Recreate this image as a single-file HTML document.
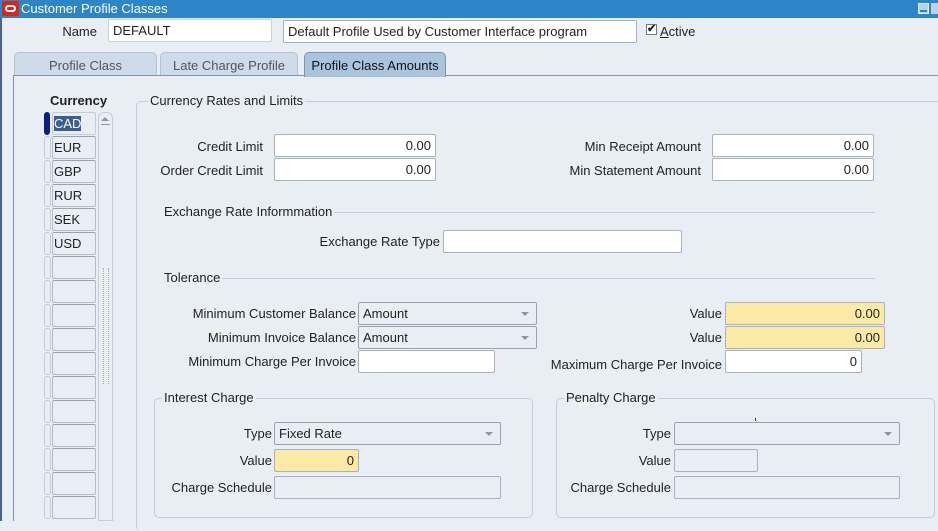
<!DOCTYPE html>
<html><head><style>
*{box-sizing:border-box;margin:0;padding:0}
body{width:938px;height:521px;overflow:hidden;background:#e9eef5;font-family:"Liberation Sans",sans-serif;font-size:13px;color:#222;position:relative}
.a{position:absolute}
.lbl{position:absolute;text-align:right;white-space:nowrap;font-size:13px}
.f{position:absolute;background:#fff;border:1px solid #a8b2bf;border-radius:2px;height:23px;line-height:21px;padding:0 4px;font-size:13px;white-space:nowrap}
.y{background:#fbeaa5}
.d{background:#e9eef5}
.r{text-align:right}
.dd::after{content:"";position:absolute;right:7px;top:9px;border-left:4px solid transparent;border-right:4px solid transparent;border-top:4px solid #8d96a2}
.dd{background:#e9eef5;border-color:#9aa3ae}
.box{position:absolute;border:1px solid #c3ccd8;border-radius:5px}
.leg{position:absolute;background:#e9eef5;padding:0 2px;font-size:13px}
.hl{position:absolute;height:1px;background:#c3ccd8}
.tab{position:absolute;top:52px;height:24px;border:1px solid #b4c3d4;border-bottom:none;border-radius:5px 5px 0 0;background:#cddbea;color:#555;text-align:center;line-height:25px;font-size:13px}
.cell{position:absolute;left:44px;width:52px;height:23px}
.cell .i{position:absolute;left:0;top:0;width:7px;height:23px;border:1px solid #c3ccd8;border-radius:3px}
.cell .v{position:absolute;left:8px;top:0;width:44px;height:23px;border:1px solid #b4bcc8;border-top-color:#9aa2ad;border-radius:2px;padding-left:1px;line-height:21px}
</style></head><body>
<div class="a" style="left:0;top:0;width:938px;height:18px;background:#2d84c6"></div>
<div class="a" style="left:2px;top:1px;width:17px;height:15px;background:#d9261c"></div>
<div class="a" style="left:5px;top:5px;width:11px;height:7px;border:2px solid #fff;border-radius:4px"></div>
<div class="a" style="left:21px;top:1px;color:#fff;font-size:13px;line-height:16px">Customer Profile Classes</div>
<div class="a" style="left:918px;top:3px;width:11px;height:11px;background:#b9d2ea;border:1px solid #e0ecf7"></div>
<div class="a" style="left:920px;top:10px;width:7px;height:2px;background:#2d84c6"></div>
<div class="a" style="left:931px;top:3px;width:7px;height:11px;background:#b9d2ea"></div>
<div class="a" style="left:0;top:18px;width:2px;height:503px;background:#4a6590"></div>

<div class="lbl" style="right:841px;top:24px">Name</div>
<div class="f" style="left:108px;top:19px;width:164px;border-color:#c9d0d9">DEFAULT</div>
<div class="f" style="left:283px;top:20px;width:354px">Default Profile Used by Customer Interface program</div>
<div class="a" style="left:646px;top:24px;width:11px;height:11px;border:1px solid #777;background:#fff;font-size:11px;line-height:9px;text-align:center;font-weight:bold">✔</div>
<div class="a" style="left:660px;top:24px"><u>A</u>ctive</div>

<div class="tab" style="left:14px;width:143px">Profile Class</div>
<div class="tab" style="left:160px;width:138px">Late Charge Profile</div>
<div class="a" style="left:13px;top:75px;width:925px;height:1px;background:#7f94ad"></div>
<div class="a" style="left:13px;top:75px;width:1px;height:446px;background:#7f94ad"></div>
<div class="tab" style="left:304px;width:142px;height:25px;background:#a9c5de;color:#111;border-color:#7f94ad">Profile Class Amounts</div>

<div class="a" style="left:50px;top:93px;font-weight:bold;font-size:13px">Currency</div>
<div class="cell" style="top:112px"><div class="i" style="background:#0a1f7f;border-color:#0a1f7f;width:6px"></div><div class="v" style="border-color:#c3ccd8"><span style="background:#3a5f8f;color:#fff">CAD</span></div></div>
<div class="cell" style="top:136px"><div class="i"></div><div class="v">EUR</div></div>
<div class="cell" style="top:160px"><div class="i"></div><div class="v">GBP</div></div>
<div class="cell" style="top:184px"><div class="i"></div><div class="v">RUR</div></div>
<div class="cell" style="top:208px"><div class="i"></div><div class="v">SEK</div></div>
<div class="cell" style="top:232px"><div class="i"></div><div class="v">USD</div></div>
<div class="cell" style="top:256px"><div class="i"></div><div class="v"></div></div>
<div class="cell" style="top:280px"><div class="i"></div><div class="v"></div></div>
<div class="cell" style="top:304px"><div class="i"></div><div class="v"></div></div>
<div class="cell" style="top:328px"><div class="i"></div><div class="v"></div></div>
<div class="cell" style="top:352px"><div class="i"></div><div class="v"></div></div>
<div class="cell" style="top:376px"><div class="i"></div><div class="v"></div></div>
<div class="cell" style="top:400px"><div class="i"></div><div class="v"></div></div>
<div class="cell" style="top:424px"><div class="i"></div><div class="v"></div></div>
<div class="cell" style="top:448px"><div class="i"></div><div class="v"></div></div>
<div class="cell" style="top:472px"><div class="i"></div><div class="v"></div></div>
<div class="cell" style="top:496px"><div class="i"></div><div class="v"></div></div>
<div class="a" style="left:98px;top:112px;width:15px;height:409px;border:1px solid #c3ccd8;border-radius:6px 6px 0 0"></div>
<div class="a" style="left:101px;top:117px;border-left:4px solid transparent;border-right:4px solid transparent;border-bottom:4px solid #8d96a2"></div>
<div class="a" style="left:101px;top:124px;width:9px;height:1px;background:#8d96a2"></div>
<div class="a" style="left:103px;top:268px;width:6px;height:116px;border-left:1px dotted #aaa;border-right:1px dotted #aaa"></div>

<div class="box" style="left:136px;top:101px;width:810px;height:430px;border-right:none;border-bottom:none"></div>
<div class="leg" style="left:148px;top:93px">Currency Rates and Limits</div>

<div class="lbl" style="right:675px;top:139px">Credit Limit</div>
<div class="f r" style="left:274px;top:134px;width:162px">0.00</div>
<div class="lbl" style="right:675px;top:163px">Order Credit Limit</div>
<div class="f r" style="left:274px;top:158px;width:162px">0.00</div>
<div class="lbl" style="right:237px;top:139px">Min Receipt Amount</div>
<div class="f r" style="left:712px;top:134px;width:162px">0.00</div>
<div class="lbl" style="right:237px;top:163px">Min Statement Amount</div>
<div class="f r" style="left:712px;top:158px;width:162px">0.00</div>

<div class="hl" style="left:162px;top:212px;width:713px"></div>
<div class="leg" style="left:162px;top:204px">Exchange Rate Informmation</div>
<div class="lbl" style="right:498px;top:234px">Exchange Rate Type</div>
<div class="f" style="left:443px;top:230px;width:239px"></div>

<div class="hl" style="left:162px;top:278px;width:713px"></div>
<div class="leg" style="left:162px;top:270px">Tolerance</div>
<div class="lbl" style="right:582px;top:306px">Minimum Customer Balance</div>
<div class="f dd" style="left:358px;top:302px;width:179px">Amount</div>
<div class="lbl" style="right:582px;top:330px">Minimum Invoice Balance</div>
<div class="f dd" style="left:358px;top:326px;width:179px">Amount</div>
<div class="lbl" style="right:582px;top:354px">Minimum Charge Per Invoice</div>
<div class="f" style="left:358px;top:350px;width:137px"></div>
<div class="lbl" style="right:216px;top:306px">Value</div>
<div class="f y r" style="left:725px;top:302px;width:160px">0.00</div>
<div class="lbl" style="right:216px;top:330px">Value</div>
<div class="f y r" style="left:725px;top:326px;width:160px">0.00</div>
<div class="lbl" style="right:216px;top:357px">Maximum Charge Per Invoice</div>
<div class="f r" style="left:725px;top:350px;width:137px">0</div>

<div class="box" style="left:154px;top:398px;width:379px;height:120px"></div>
<div class="leg" style="left:162px;top:390px">Interest Charge</div>
<div class="lbl" style="right:666px;top:426px">Type</div>
<div class="f dd" style="left:274px;top:422px;width:227px">Fixed Rate</div>
<div class="lbl" style="right:666px;top:453px">Value</div>
<div class="f y r" style="left:274px;top:449px;width:85px">0</div>
<div class="lbl" style="right:666px;top:480px">Charge Schedule</div>
<div class="f d" style="left:274px;top:476px;width:227px"></div>

<div class="box" style="left:556px;top:398px;width:379px;height:120px"></div>
<div class="leg" style="left:564px;top:390px">Penalty Charge</div>
<div class="a" style="left:755px;top:418px;width:1px;height:3px;background:#333"></div>
<div class="lbl" style="right:267px;top:426px">Type</div>
<div class="f dd" style="left:674px;top:422px;width:226px"></div>
<div class="lbl" style="right:267px;top:453px">Value</div>
<div class="f d" style="left:674px;top:449px;width:84px"></div>
<div class="lbl" style="right:267px;top:480px">Charge Schedule</div>
<div class="f d" style="left:674px;top:476px;width:226px"></div>
</body></html>
